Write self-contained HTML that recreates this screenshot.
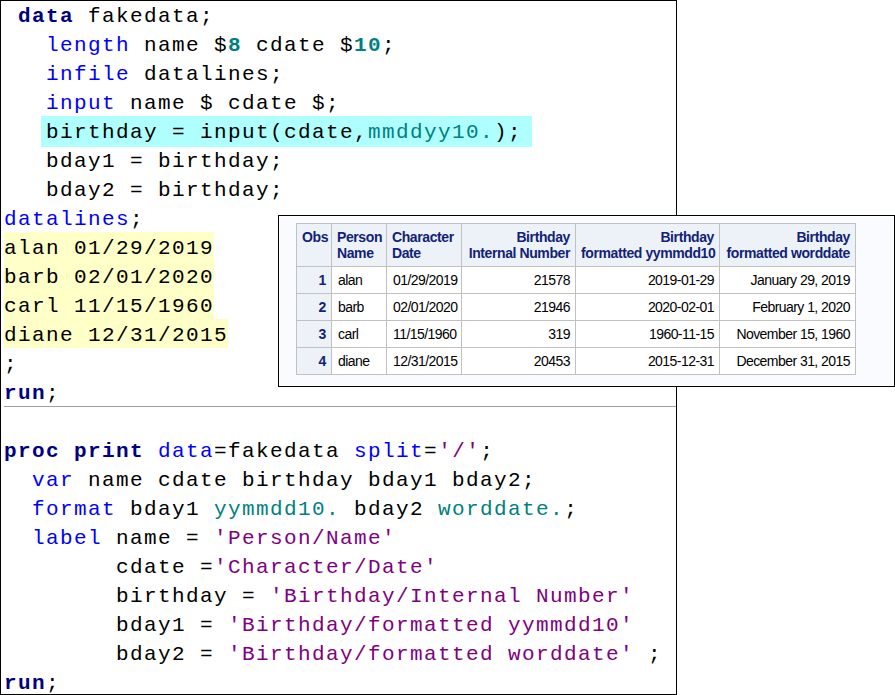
<!DOCTYPE html>
<html><head><meta charset="utf-8">
<style>
html,body{margin:0;padding:0;background:#fff;width:895px;height:695px;overflow:hidden;position:relative}
.code{position:absolute;left:0;top:0;width:677px;height:695px;box-sizing:border-box;border:1px solid #000;background:#fff}
.sep{position:absolute;left:4px;top:406px;width:672px;height:1px;background:#a0a0a0}
.hl-c{position:absolute;left:41px;top:116px;width:491px;height:31px;background:#afffff}
.hl-y{position:absolute;background:#ffffc8;height:29px;left:4px}
.lines{position:absolute;left:4px;top:2px;font-family:"Liberation Mono",monospace;font-size:21px;letter-spacing:1.4px;line-height:29px;color:#000}
.lines div{height:29px;white-space:pre}
.k{color:#000080;font-weight:bold}
.s{color:#0000ff}
.n{color:#008080;font-weight:bold}
.f{color:#008080}
.q{color:#800080}
.panel{position:absolute;left:278px;top:215px;width:617px;height:172px;box-sizing:border-box;border:1px solid #000;background:#fafbfe;box-shadow:inset 0 0 0 1px #fff}
table{position:absolute;left:17px;top:7px;width:559px;border-collapse:collapse;table-layout:fixed;font-family:"Liberation Sans",sans-serif;font-size:13.33px;line-height:16px}
td,th{border:1px solid #c1c1c1;padding:0 5px 0 6px;overflow:hidden;white-space:nowrap}
th{background:#edf2f9;color:#112277;font-weight:bold;font-size:14px;letter-spacing:-0.4px;padding-left:5px;height:43px;text-align:left;vertical-align:top;padding-top:5px;box-sizing:border-box}
th.r{text-align:right}
td{background:#fff;color:#000;height:27px;box-sizing:border-box;vertical-align:top;padding-top:5px;text-align:right;font-size:14px;letter-spacing:-0.55px}
td.l{text-align:left}
td.o{background:#edf2f9;color:#112277;font-weight:bold;font-size:14px;letter-spacing:-0.2px}
</style></head><body>
<div class="code">
</div>
<div class="hl-c"></div>
<div class="hl-y" style="top:232px;width:210px"></div>
<div class="hl-y" style="top:261px;width:210px"></div>
<div class="hl-y" style="top:290px;width:210px"></div>
<div class="hl-y" style="top:319px;width:224px"></div>
<div class="sep"></div>
<div class="lines">
<div> <span class="k">data</span> fakedata;</div>
<div>   <span class="s">length</span> name $<span class="n">8</span> cdate $<span class="n">10</span>;</div>
<div>   <span class="s">infile</span> datalines;</div>
<div>   <span class="s">input</span> name $ cdate $;</div>
<div>   birthday = input(cdate,<span class="f">mmddyy10.</span>);</div>
<div>   bday1 = birthday;</div>
<div>   bday2 = birthday;</div>
<div><span class="s">datalines</span>;</div>
<div>alan 01/29/2019</div>
<div>barb 02/01/2020</div>
<div>carl 11/15/1960</div>
<div>diane 12/31/2015</div>
<div>;</div>
<div><span class="k">run</span>;</div>
<div> </div>
<div><span class="k">proc print</span> <span class="s">data</span>=fakedata <span class="s">split</span>=<span class="q">'/'</span>;</div>
<div>  <span class="s">var</span> name cdate birthday bday1 bday2;</div>
<div>  <span class="s">format</span> bday1 <span class="f">yymmdd10.</span> bday2 <span class="f">worddate.</span>;</div>
<div>  <span class="s">label</span> name = <span class="q">'Person/Name'</span></div>
<div>        cdate =<span class="q">'Character/Date'</span></div>
<div>        birthday = <span class="q">'Birthday/Internal Number'</span></div>
<div>        bday1 = <span class="q">'Birthday/formatted yymmdd10'</span></div>
<div>        bday2 = <span class="q">'Birthday/formatted worddate'</span> ;</div>
<div><span class="k">run</span>;</div>
</div>
<div class="panel">
<table>
<colgroup><col style="width:35px"><col style="width:55px"><col style="width:75px"><col style="width:114px"><col style="width:144px"><col style="width:136px"></colgroup>
<tr><th class="r">Obs</th><th>Person<br>Name</th><th>Character<br>Date</th><th class="r">Birthday<br>Internal Number</th><th class="r">Birthday<br>formatted yymmdd10</th><th class="r">Birthday<br>formatted worddate</th></tr>
<tr><td class="o">1</td><td class="l">alan</td><td class="l">01/29/2019</td><td>21578</td><td>2019-01-29</td><td>January 29, 2019</td></tr>
<tr><td class="o">2</td><td class="l">barb</td><td class="l">02/01/2020</td><td>21946</td><td>2020-02-01</td><td>February 1, 2020</td></tr>
<tr><td class="o">3</td><td class="l">carl</td><td class="l">11/15/1960</td><td>319</td><td>1960-11-15</td><td>November 15, 1960</td></tr>
<tr><td class="o">4</td><td class="l">diane</td><td class="l">12/31/2015</td><td>20453</td><td>2015-12-31</td><td>December 31, 2015</td></tr>
</table>
</div>
</body></html>
